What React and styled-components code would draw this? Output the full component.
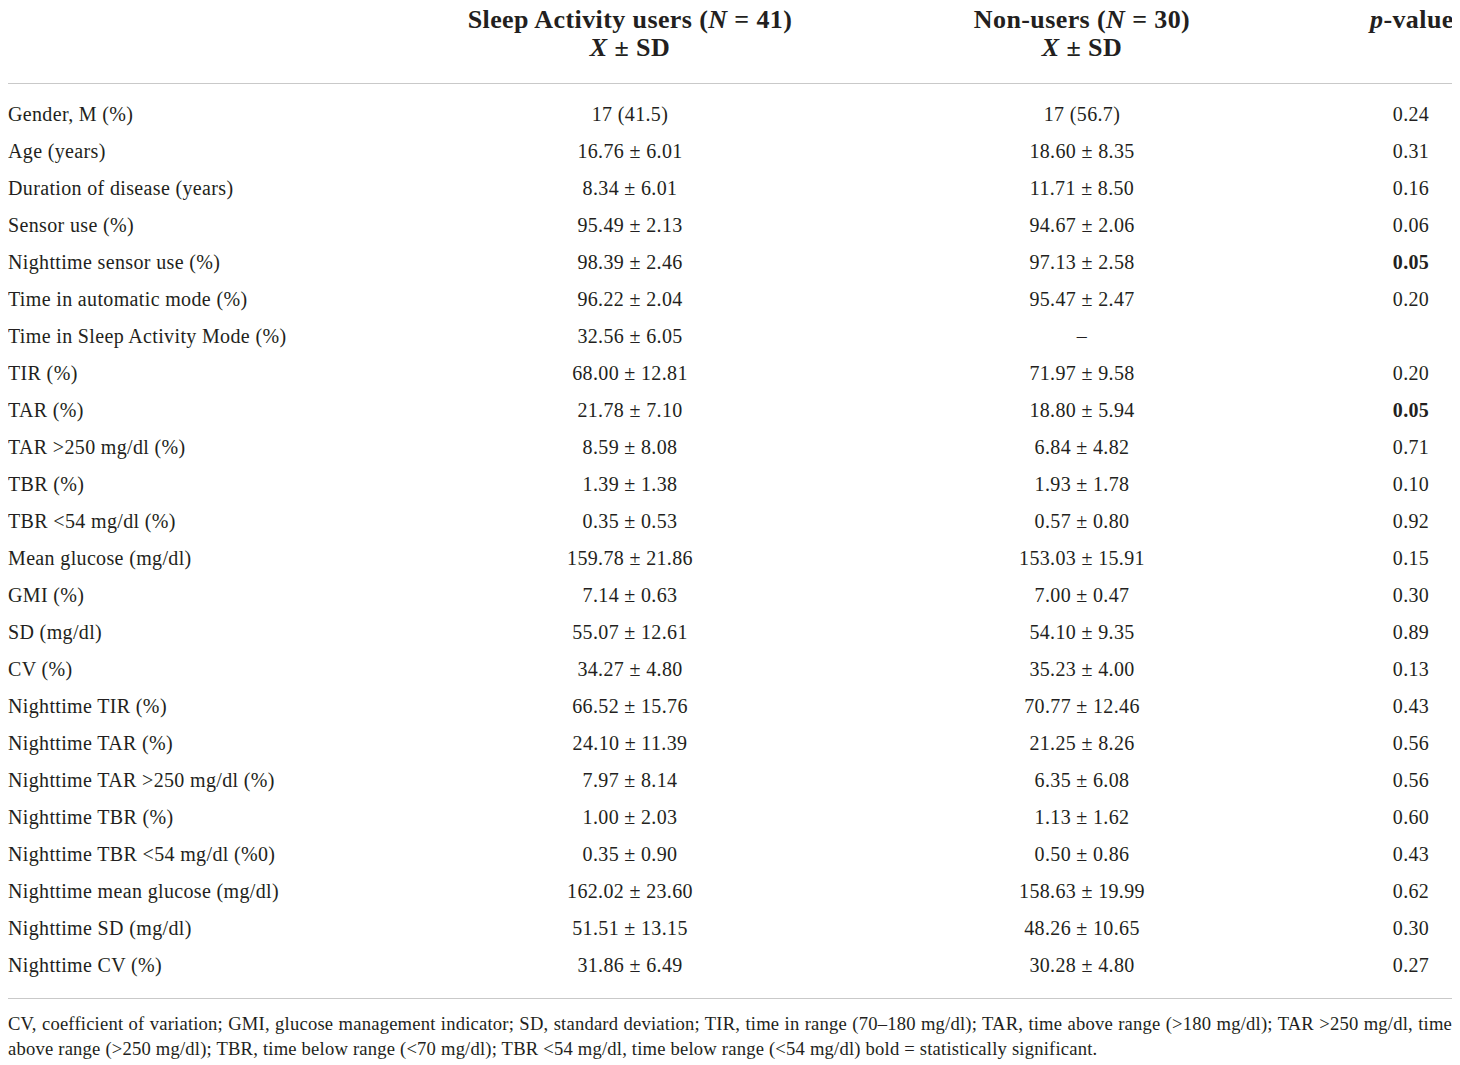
import React from "react";
import styled, { createGlobalStyle } from "styled-components";

const Global = createGlobalStyle`
  body {
    margin: 6px 8px 8px;
    background: #ffffff;
    color: #231f20;
    font-family: "Liberation Serif", "Times New Roman", serif;
  }
`;

const Table = styled.div`
  width: 1444px;
  display: grid;
  grid-template-columns: 458px 328px 576px 82px;
`;

const HeadCell = styled.div`
  font-weight: 700;
  font-size: 26px;
  letter-spacing: 0.4px;
  line-height: 28px;
  text-align: ${(p) => p.$align || "center"};
  padding-bottom: 21px;
  border-bottom: 1px solid #c9c9c9;
  white-space: nowrap;
`;

const Cell = styled.div`
  font-size: 20px;
  letter-spacing: 0.35px;
  line-height: 37px;
  height: 37px;
  text-align: ${(p) => p.$align || "center"};
  font-weight: ${(p) => (p.$bold ? 700 : 400)};
  white-space: nowrap;
  padding-top: ${(p) => (p.$first ? "12px" : "0")};
  padding-bottom: ${(p) => (p.$last ? "14px" : "0")};
  border-bottom: ${(p) => (p.$last ? "1px solid #c9c9c9" : "none")};
  box-sizing: content-box;
`;

const Note = styled.p`
  margin: 12px 0 0;
  width: 1444px;
  font-size: 18.6px;
  letter-spacing: 0.2px;
  line-height: 25px;
  text-align: justify;
`;

const rows = [
  ["Gender, M (%)", "17 (41.5)", "17 (56.7)", "0.24"],
  ["Age (years)", "16.76 ± 6.01", "18.60 ± 8.35", "0.31"],
  ["Duration of disease (years)", "8.34 ± 6.01", "11.71 ± 8.50", "0.16"],
  ["Sensor use (%)", "95.49 ± 2.13", "94.67 ± 2.06", "0.06"],
  ["Nighttime sensor use (%)", "98.39 ± 2.46", "97.13 ± 2.58", "0.05", true],
  ["Time in automatic mode (%)", "96.22 ± 2.04", "95.47 ± 2.47", "0.20"],
  ["Time in Sleep Activity Mode (%)", "32.56 ± 6.05", "–", ""],
  ["TIR (%)", "68.00 ± 12.81", "71.97 ± 9.58", "0.20"],
  ["TAR (%)", "21.78 ± 7.10", "18.80 ± 5.94", "0.05", true],
  ["TAR >250 mg/dl (%)", "8.59 ± 8.08", "6.84 ± 4.82", "0.71"],
  ["TBR (%)", "1.39 ± 1.38", "1.93 ± 1.78", "0.10"],
  ["TBR <54 mg/dl (%)", "0.35 ± 0.53", "0.57 ± 0.80", "0.92"],
  ["Mean glucose (mg/dl)", "159.78 ± 21.86", "153.03 ± 15.91", "0.15"],
  ["GMI (%)", "7.14 ± 0.63", "7.00 ± 0.47", "0.30"],
  ["SD (mg/dl)", "55.07 ± 12.61", "54.10 ± 9.35", "0.89"],
  ["CV (%)", "34.27 ± 4.80", "35.23 ± 4.00", "0.13"],
  ["Nighttime TIR (%)", "66.52 ± 15.76", "70.77 ± 12.46", "0.43"],
  ["Nighttime TAR (%)", "24.10 ± 11.39", "21.25 ± 8.26", "0.56"],
  ["Nighttime TAR >250 mg/dl (%)", "7.97 ± 8.14", "6.35 ± 6.08", "0.56"],
  ["Nighttime TBR (%)", "1.00 ± 2.03", "1.13 ± 1.62", "0.60"],
  ["Nighttime TBR <54 mg/dl (%0)", "0.35 ± 0.90", "0.50 ± 0.86", "0.43"],
  ["Nighttime mean glucose (mg/dl)", "162.02 ± 23.60", "158.63 ± 19.99", "0.62"],
  ["Nighttime SD (mg/dl)", "51.51 ± 13.15", "48.26 ± 10.65", "0.30"],
  ["Nighttime CV (%)", "31.86 ± 6.49", "30.28 ± 4.80", "0.27"],
];

export default function App() {
  return (
    <>
      <Global />
      <Table>
        <HeadCell $align="left" />
        <HeadCell>
          Sleep Activity users (<i>N</i> = 41)
          <br />
          <i>X</i> ± SD
        </HeadCell>
        <HeadCell>
          Non-users (<i>N</i> = 30)
          <br />
          <i>X</i> ± SD
        </HeadCell>
        <HeadCell $align="right">
          <i>p</i>-value
        </HeadCell>
        {rows.map((r, i) => {
          const first = i === 0;
          const last = i === rows.length - 1;
          return (
            <React.Fragment key={i}>
              <Cell $align="left" $first={first} $last={last}>{r[0]}</Cell>
              <Cell $first={first} $last={last}>{r[1]}</Cell>
              <Cell $first={first} $last={last}>{r[2]}</Cell>
              <Cell $first={first} $last={last} $bold={r[4]}>{r[3]}</Cell>
            </React.Fragment>
          );
        })}
      </Table>
      <Note>
        CV, coefficient of variation; GMI, glucose management indicator; SD, standard deviation; TIR, time in range (70–180 mg/dl); TAR, time above range (&gt;180 mg/dl); TAR &gt;250 mg/dl, time above range (&gt;250 mg/dl); TBR, time below range (&lt;70 mg/dl); TBR &lt;54 mg/dl, time below range (&lt;54 mg/dl) bold = statistically significant.
      </Note>
    </>
  );
}
